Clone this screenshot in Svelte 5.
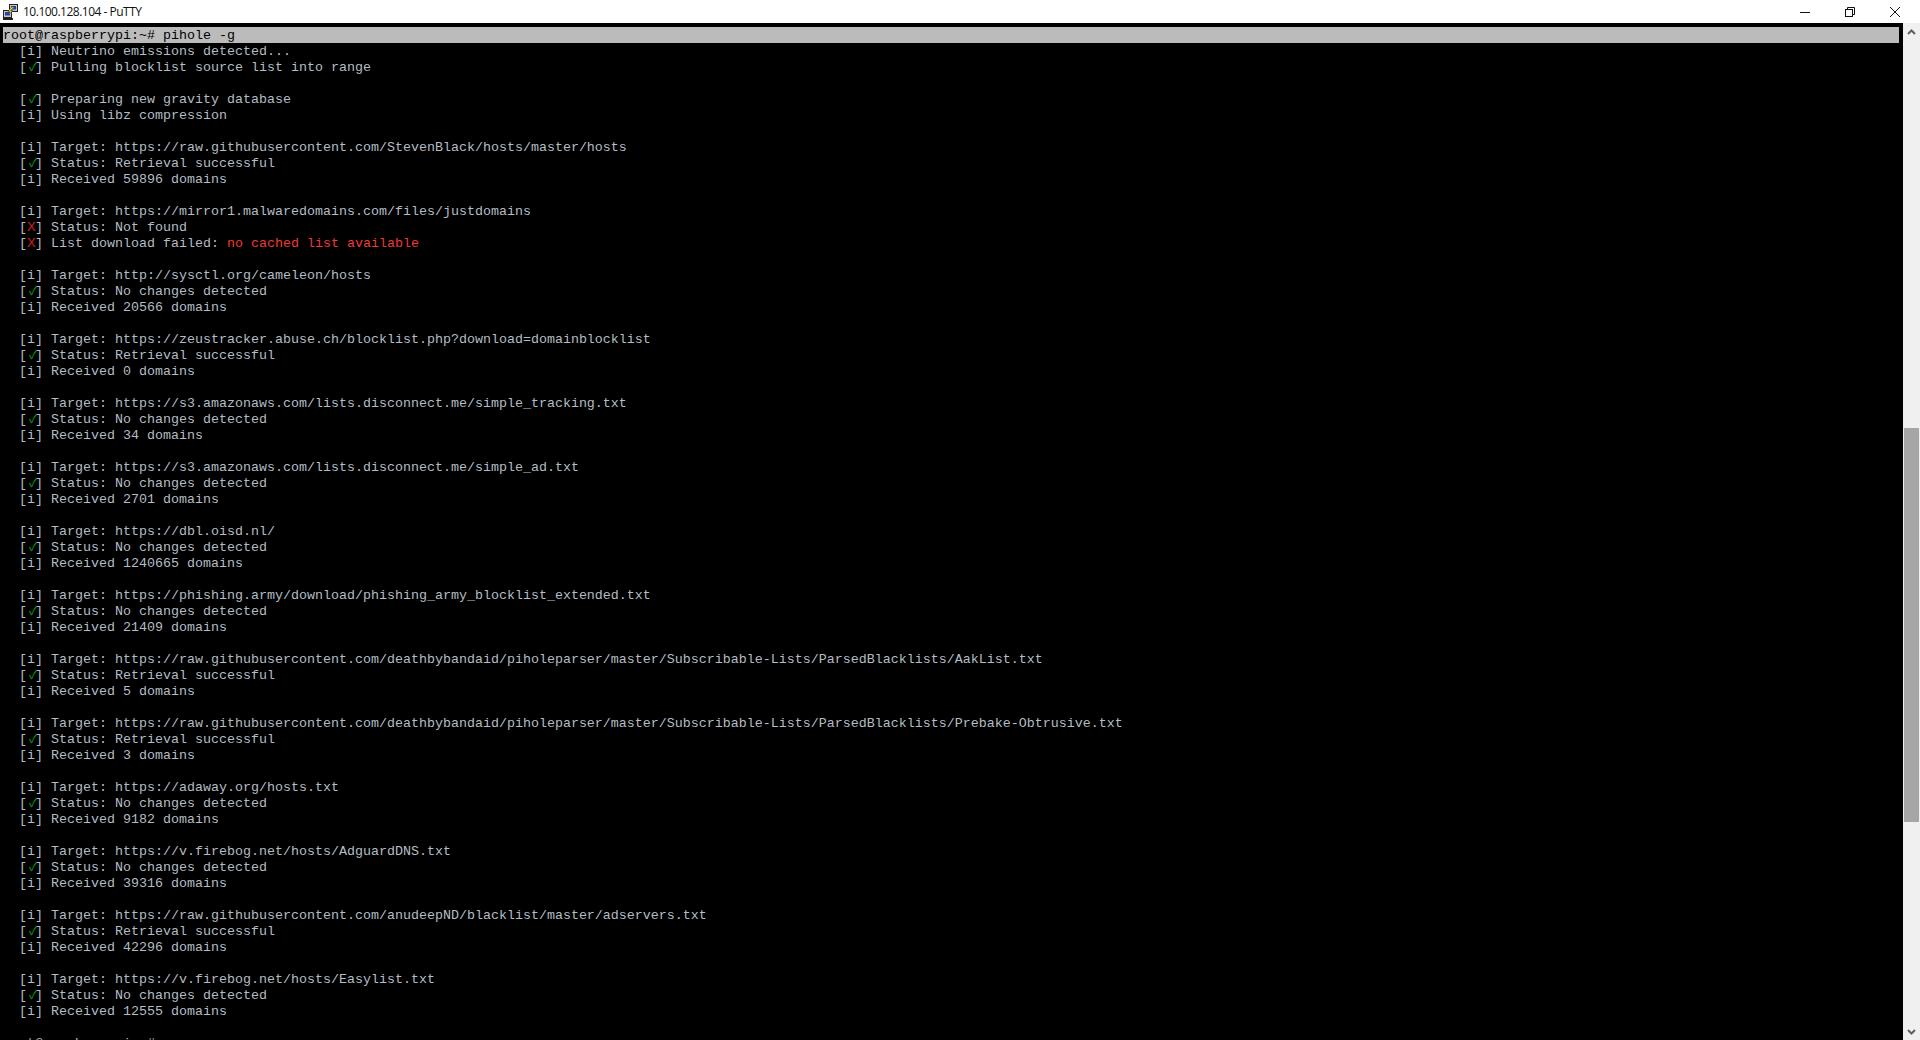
<script>
    const CHANGED = 'Retrieval successful'
    const SAME = 'No changes detected'

    const targets = [
        ['https://raw.githubusercontent.com/StevenBlack/hosts/master/hosts', CHANGED, 59896],
        ['https://mirror1.malwaredomains.com/files/justdomains', null, 0],
        ['http://sysctl.org/cameleon/hosts', SAME, 20566],
        ['https://zeustracker.abuse.ch/blocklist.php?download=domainblocklist', CHANGED, 0],
        ['https://s3.amazonaws.com/lists.disconnect.me/simple_tracking.txt', SAME, 34],
        ['https://s3.amazonaws.com/lists.disconnect.me/simple_ad.txt', SAME, 2701],
        ['https://dbl.oisd.nl/', SAME, 1240665],
        ['https://phishing.army/download/phishing_army_blocklist_extended.txt', SAME, 21409],
        ['https://raw.githubusercontent.com/deathbybandaid/piholeparser/master/Subscribable-Lists/ParsedBlacklists/AakList.txt', CHANGED, 5],
        ['https://raw.githubusercontent.com/deathbybandaid/piholeparser/master/Subscribable-Lists/ParsedBlacklists/Prebake-Obtrusive.txt', CHANGED, 3],
        ['https://adaway.org/hosts.txt', SAME, 9182],
        ['https://v.firebog.net/hosts/AdguardDNS.txt', SAME, 39316],
        ['https://raw.githubusercontent.com/anudeepND/blacklist/master/adservers.txt', CHANGED, 42296],
        ['https://v.firebog.net/hosts/Easylist.txt', SAME, 12555]
    ]

    let lines = [
        { mark: 'i', text: 'Neutrino emissions detected...' },
        { mark: 'ok', text: 'Pulling blocklist source list into range' },
        {},
        { mark: 'ok', text: 'Preparing new gravity database' },
        { mark: 'i', text: 'Using libz compression' },
        {}
    ]

    for (const [url, status, count] of targets) {
        lines.push({ mark: 'i', text: 'Target: ' + url })
        if (status) {
            lines.push({ mark: 'ok', text: 'Status: ' + status })
            lines.push({ mark: 'i', text: 'Received ' + count + ' domains' })
        } else {
            lines.push({ mark: 'x', text: 'Status: Not found' })
            lines.push({ mark: 'x', text: 'List download failed: ', error: 'no cached list available' })
        }
        lines.push({})
    }
</script>

<div class="window">
    <header class="titlebar">
        <svg class="appicon" width="16" height="16" viewBox="0 0 16 16">
            <rect x="7.5" y="0.5" width="8" height="7" fill="#c8c8c8" stroke="#222"/>
            <rect x="9" y="2" width="5" height="3.5" fill="#2a3fb0"/>
            <rect x="1.5" y="6.5" width="8" height="7" fill="#c8c8c8" stroke="#222"/>
            <rect x="3" y="8" width="5" height="3.5" fill="#2a3fb0"/>
            <path d="M1 15h10" stroke="#222" stroke-width="2"/>
            <path d="M12.5 3L8.5 6.5h2.5L7 10.5l1-3H6L9.5 3z" fill="#f2e030" stroke="#333" stroke-width=".5"/>
        </svg>
        <span class="title">10.100.128.104 - PuTTY</span>
        <div class="controls">
            <svg width="10" height="10" viewBox="0 0 10 10"><path d="M0 5.5h10" stroke="#111"/></svg>
            <svg width="10" height="10" viewBox="0 0 10 10" fill="none" stroke="#111"><rect x=".5" y="2.5" width="7" height="7"/><path d="M2.5 2.5v-2h7v7h-2"/></svg>
            <svg width="10" height="10" viewBox="0 0 10 10" stroke="#111"><path d="M0 0l10 10M10 0L0 10"/></svg>
        </div>
    </header>

    <main class="body">
        <div class="terminal">
            <div class="row selected">root@raspberrypi:~# pihole -g</div>
            {#each lines as line}
                <div class="row indented">{#if line.mark}[{#if line.mark === 'i'}i{:else if line.mark === 'ok'}<span class="ok">✓</span>{:else}<span class="bad">X</span>{/if}] {line.text}{#if line.error}<span class="err">{line.error}</span>{/if}{/if}</div>
            {/each}
            <div class="row">root@raspberrypi:~#</div>
        </div>

        <div class="scrollbar">
            <svg class="arrow" width="9" height="6" viewBox="0 0 9 6"><path d="M1 5l3.5-3.5L8 5" fill="none" stroke="#606060" stroke-width="2"/></svg>
            <div class="thumb"></div>
            <svg class="arrow down" width="9" height="6" viewBox="0 0 9 6"><path d="M1 1l3.5 3.5L8 1" fill="none" stroke="#606060" stroke-width="2"/></svg>
        </div>
    </main>
</div>

<style>
    :global(body) {
        margin: 0;
        background: #000;
    }

    .window {
        display: flex;
        flex-direction: column;
        height: 1040px;
        overflow: hidden;
    }

    .titlebar {
        display: flex;
        align-items: center;
        flex: none;
        height: 23px;
        background: #fff;
    }

    .appicon {
        flex: none;
        margin-left: 2px;
    }

    .title {
        margin-left: 5px;
        font: 12px "Open Sans", sans-serif;
        letter-spacing: -0.5px;
        color: #111;
    }

    .controls {
        display: flex;
        gap: 35px;
        margin-left: auto;
        margin-right: 20px;
    }

    .body {
        display: flex;
        flex: 1;
        min-height: 0;
    }

    .terminal {
        flex: 1;
        min-width: 0;
        padding: 4px 4px 0 3px;
        background: #000;
        color: #b4bcc4;
        font: 13.33px/18px "Liberation Mono", monospace;
        overflow: hidden;
    }

    .row {
        height: 16px;
        white-space: pre;
    }

    .indented {
        padding-left: 16px;
    }

    .selected {
        background: #bbb;
        color: #000;
    }

    .ok, .bad {
        display: inline-block;
        width: 8px;
        line-height: 0;
        text-align: center;
        white-space: nowrap;
    }

    .ok {
        color: #00a800;
        font-family: "Noto Sans CJK JP", sans-serif;
        font-size: 12px;
        letter-spacing: -4px;
    }

    .bad {
        color: #d02020;
        font-family: "Liberation Sans", sans-serif;
        font-size: 13px;
    }

    .err {
        color: #f03838;
    }

    .scrollbar {
        display: flex;
        flex-direction: column;
        align-items: center;
        flex: none;
        width: 17px;
        background: #f0f0f0;
    }

    .arrow {
        flex: none;
        margin-top: 6px;
    }

    .down {
        margin-top: auto;
        margin-bottom: 5px;
    }

    .thumb {
        flex: none;
        width: 15px;
        height: 394px;
        margin-top: 393px;
        margin-right: 1px;
        background: #a6a6a6;
    }
</style>
